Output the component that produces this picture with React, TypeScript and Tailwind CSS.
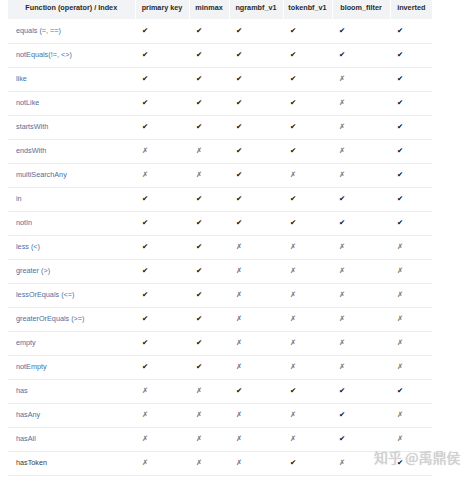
import React from "react";

const Y = true;
const N = false;

const rows: { name: string; link: boolean; v: boolean[] }[] = [
  { name: "equals (=, ==)", link: true, v: [Y, Y, Y, Y, Y, Y] },
  { name: "notEquals(!=, <>)", link: true, v: [Y, Y, Y, Y, Y, Y] },
  { name: "like", link: true, v: [Y, Y, Y, Y, N, Y] },
  { name: "notLike", link: true, v: [Y, Y, Y, Y, N, Y] },
  { name: "startsWith", link: true, v: [Y, Y, Y, Y, N, Y] },
  { name: "endsWith", link: true, v: [N, N, Y, Y, N, Y] },
  { name: "multiSearchAny", link: true, v: [N, N, Y, N, N, Y] },
  { name: "in", link: true, v: [Y, Y, Y, Y, Y, Y] },
  { name: "notIn", link: true, v: [Y, Y, Y, Y, Y, Y] },
  { name: "less (<)", link: true, v: [Y, Y, N, N, N, N] },
  { name: "greater (>)", link: true, v: [Y, Y, N, N, N, N] },
  { name: "lessOrEquals (<=)", link: true, v: [Y, Y, N, N, N, N] },
  { name: "greaterOrEquals (>=)", link: true, v: [Y, Y, N, N, N, N] },
  { name: "empty", link: true, v: [Y, Y, N, N, N, N] },
  { name: "notEmpty", link: true, v: [Y, Y, N, N, N, N] },
  { name: "has", link: true, v: [N, N, Y, Y, Y, Y] },
  { name: "hasAny", link: true, v: [N, N, N, N, Y, N] },
  { name: "hasAll", link: true, v: [N, N, N, N, Y, N] },
  { name: "hasToken", link: false, v: [N, N, N, Y, N, Y] },
];

const headers = [
  "Function (operator) / Index",
  "primary key",
  "minmax",
  "ngrambf_v1",
  "tokenbf_v1",
  "bloom_filter",
  "inverted",
];

export default function App() {
  return (
    <div
      className="relative w-[474px] h-[481px] bg-white overflow-hidden"
      style={{ fontFamily: '"Liberation Sans", Arial, sans-serif' }}
    >
      <table className="ml-2 table-fixed border-collapse w-[424px] text-[7.25px] leading-none">
        <colgroup>
          <col className="w-[127px]" />
          <col className="w-[54px]" />
          <col className="w-[40px]" />
          <col className="w-[54px]" />
          <col className="w-[49px]" />
          <col className="w-[58px]" />
          <col className="w-[42px]" />
        </colgroup>
        <thead>
          <tr className="h-[19px] bg-[#f2f3f4]">
            {headers.map((h, i) => (
              <th
                key={h}
                className={`font-bold text-[#2a2a2a] text-center align-middle pb-[3px] whitespace-nowrap ${
                  i > 0 ? "border-l border-white" : ""
                }`}
              >
                {h}
              </th>
            ))}
          </tr>
        </thead>
        <tbody>
          {rows.map((r) => (
            <tr key={r.name} className="h-[24px] border-b border-[#ebebeb]">
              <td
                className={`pl-[8px] align-middle whitespace-nowrap ${
                  r.link ? "text-[#4b6fa3]" : "text-[#3a3a3a]"
                }`}
              >
                {r.name}
              </td>
              {r.v.map((ok, i) => (
                <td key={i} className="pl-[7px] align-middle">
                  {ok ? (
                    <span
                      className="text-[#111] text-[7.5px]"
                      style={{ fontFamily: '"DejaVu Sans", sans-serif' }}
                    >
                      ✔
                    </span>
                  ) : (
                    <span
                      className="text-[#777] text-[7.5px]"
                      style={{ fontFamily: '"DejaVu Sans", sans-serif' }}
                    >
                      ✗
                    </span>
                  )}
                </td>
              ))}
            </tr>
          ))}
        </tbody>
      </table>
      <div
        className="absolute left-[374px] top-[450px] text-[14px] leading-none text-[#d2d2d2] whitespace-nowrap"
        style={{
          fontFamily: '"Noto Sans CJK SC", sans-serif',
          textShadow: "0 0 1px rgba(110,110,110,0.45)",
        }}
      >
        知乎 @禹鼎侯
      </div>
    </div>
  );
}
